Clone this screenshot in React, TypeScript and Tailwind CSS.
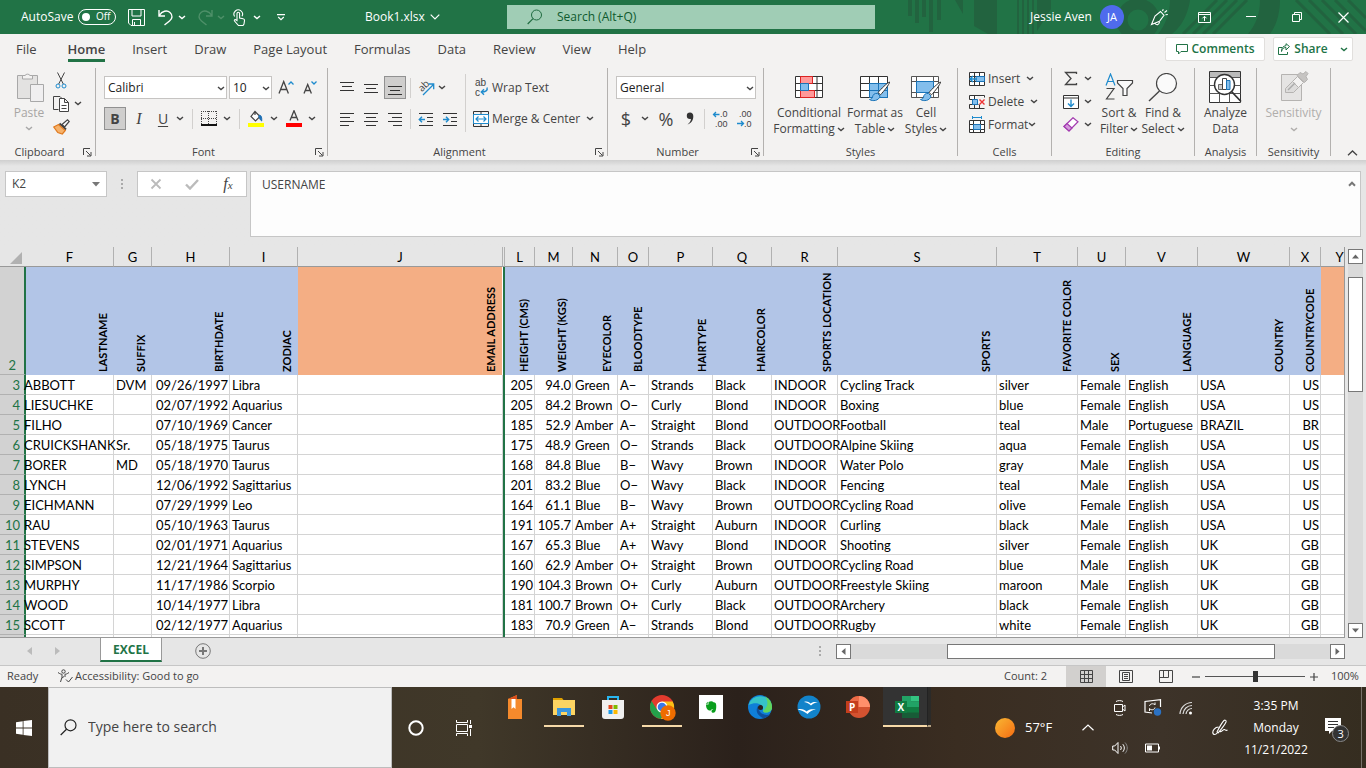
import { ReactNode } from "react"

const ink = "#444444"
const blue = "#1e8bcd"

const columns = [
  { id: "F", width: "w-[88px]", title: "LASTNAME" },
  { id: "G", width: "w-[38px]", title: "SUFFIX" },
  { id: "H", width: "w-[78px]", title: "BIRTHDATE", right: true },
  { id: "I", width: "w-[68px]", title: "ZODIAC" },
  { id: "J", width: "w-[205px]", title: "EMAIL ADDRESS", accent: true },
  { id: "K", width: "w-[2px]", title: "" },
  { id: "L", width: "w-[30px]", title: "HEIGHT (CMS)", right: true },
  { id: "M", width: "w-[38px]", title: "WEIGHT (KGS)", right: true },
  { id: "N", width: "w-[45px]", title: "EYECOLOR" },
  { id: "O", width: "w-[31px]", title: "BLOODTYPE" },
  { id: "P", width: "w-[64px]", title: "HAIRTYPE" },
  { id: "Q", width: "w-[59px]", title: "HAIRCOLOR" },
  { id: "R", width: "w-[66px]", title: "SPORTS LOCATION" },
  { id: "S", width: "w-[159px]", title: "SPORTS" },
  { id: "T", width: "w-[81px]", title: "FAVORITE COLOR" },
  { id: "U", width: "w-[48px]", title: "SEX" },
  { id: "V", width: "w-[72px]", title: "LANGUAGE" },
  { id: "W", width: "w-[92px]", title: "COUNTRY" },
  { id: "X", width: "w-[31px]", title: "COUNTRYCODE", right: true },
  { id: "Y", width: "w-[38px]", title: "", accent: true },
]

const rows = [
  "ABBOTT|DVM|09/26/1997|Libra|||205|94.0|Green|A−|Strands|Black|INDOOR|Cycling Track|silver|Female|English|USA|US|",
  "LIESUCHKE||02/07/1992|Aquarius|||205|84.2|Brown|O−|Curly|Blond|INDOOR|Boxing|blue|Female|English|USA|US|",
  "FILHO||07/10/1969|Cancer|||185|52.9|Amber|A−|Straight|Blond|OUTDOOR|Football|teal|Male|Portuguese|BRAZIL|BR|",
  "CRUICKSHANK|Sr.|05/18/1975|Taurus|||175|48.9|Green|O−|Strands|Black|OUTDOOR|Alpine Skiing|aqua|Female|English|USA|US|",
  "BORER|MD|05/18/1970|Taurus|||168|84.8|Blue|B−|Wavy|Brown|INDOOR|Water Polo|gray|Male|English|USA|US|",
  "LYNCH||12/06/1992|Sagittarius|||201|83.2|Blue|O−|Wavy|Black|INDOOR|Fencing|teal|Male|English|USA|US|",
  "EICHMANN||07/29/1999|Leo|||164|61.1|Blue|B−|Wavy|Brown|OUTDOOR|Cycling Road|olive|Female|English|USA|US|",
  "RAU||05/10/1963|Taurus|||191|105.7|Amber|A+|Straight|Auburn|INDOOR|Curling|black|Male|English|USA|US|",
  "STEVENS||02/01/1971|Aquarius|||167|65.3|Blue|A+|Wavy|Blond|INDOOR|Shooting|silver|Female|English|UK|GB|",
  "SIMPSON||12/21/1964|Sagittarius|||160|62.9|Amber|O+|Straight|Brown|OUTDOOR|Cycling Road|blue|Male|English|UK|GB|",
  "MURPHY||11/17/1986|Scorpio|||190|104.3|Brown|O+|Curly|Auburn|OUTDOOR|Freestyle Skiing|maroon|Male|English|UK|GB|",
  "WOOD||10/14/1977|Libra|||181|100.7|Brown|O+|Curly|Black|OUTDOOR|Archery|black|Female|English|UK|GB|",
  "SCOTT||02/12/1977|Aquarius|||183|70.9|Green|A−|Strands|Blond|OUTDOOR|Rugby|white|Female|English|UK|GB|",
].map((line) => line.split("|"))

function Svg({ w, h, children, className = "" }: { w: number; h: number; children: ReactNode; className?: string }) {
  return (
    <svg width={w} height={h} viewBox={`0 0 ${w} ${h}`} fill="none" stroke={ink} className={`shrink-0 ${className}`} aria-hidden="true">
      {children}
    </svg>
  )
}

function Chevron({ color = ink, className = "" }: { color?: string; className?: string }) {
  return (
    <Svg w={8} h={5} className={className}>
      <path d="M1 1l3 2.6L7 1" stroke={color} strokeWidth="1.4" />
    </Svg>
  )
}

function IconButton({ label, className = "", children }: { label: string; className?: string; children: ReactNode }) {
  return (
    <button type="button" aria-label={label} className={`flex shrink-0 items-center justify-center ${className}`}>
      {children}
    </button>
  )
}

function Group({ label, width, launcher, children }: { label: string; width: string; launcher?: boolean; children: ReactNode }) {
  return (
    <section aria-label={label} className={`flex shrink-0 ${width}`}>
      <div className="flex min-w-0 flex-1 flex-col">
        <div className="flex h-20">{children}</div>
        <div className="flex h-4 items-center text-[11px]">
          <span className="flex-1 text-center">{label}</span>
          {launcher && (
            <IconButton label={`${label} settings`} className="w-4">
              <Svg w={9} h={9}>
                <path d="M.5 7V.5H7M3 3l4.5 4.5M8 4v4H4" />
              </Svg>
            </IconButton>
          )}
        </div>
      </div>
      <div className="my-1 w-px bg-[#b3b1af]" />
    </section>
  )
}

function BigButton({ lines, width, icon, chevron, disabled }: { lines: string[]; width: string; icon: ReactNode; chevron?: boolean; disabled?: boolean }) {
  return (
    <button type="button" disabled={disabled} className={`flex shrink-0 flex-col items-center pt-[6px] text-xs leading-4 whitespace-nowrap disabled:text-[#b0aeac] ${width}`}>
      <span className="flex h-[35px] items-center">{icon}</span>
      <span>{lines[0]}</span>
      <span className="flex h-4 items-center gap-[2px]">
        {lines[1]}
        {chevron && <Chevron color={disabled ? "#b0aeac" : ink} />}
      </span>
    </button>
  )
}

function Combo({ label, value, width }: { label: string; value: string; width: string }) {
  return (
    <div className={`relative h-[23px] shrink-0 ${width}`}>
      <select aria-label={label} className="h-full w-full appearance-none border border-[#c6c4c2] bg-white pl-[3px] text-xs text-[#222]">
        <option>{value}</option>
      </select>
      <Chevron className="pointer-events-none absolute top-[10px] right-[2px]" />
    </div>
  )
}

function TitlePattern() {
  return (
    <svg className="absolute top-0 right-0" width="466" height="34" viewBox="0 0 466 34" fill="#22633f" aria-hidden="true">
      <path d="M8 0h4v16H8zM15 0h4v23h-4zM22 0h4v17h-4zM29 0h4v32h-4zM37 0h4v20h-4zM55 0h8v14zM74 0h23v34H88L74 26zM117 0h2v34h-2zM122 0h2v34h-2zM127 0h2v34h-2zM132 0h2v34h-2zM137 0h14v9l-14 22z" />
      <circle cx="238" cy="20" r="16" fill="none" stroke="#22633f" strokeWidth="11" />
      <path d="M270 0h20c-2 14-8 26-18 34h-14c8-10 12-22 12-34zM360 0h20c0 14-4 26-10 34h-22c8-10 12-20 12-34z" />
      <path d="M283 34l34-34M293 34l34-34M303 34l34-34M313 34l34-34M396 0l34 34M409 0l34 34M422 0l34 34M435 0l31 31M448 0l18 18" stroke="#22633f" strokeWidth="3" />
    </svg>
  )
}

function TitleBar() {
  return (
    <header className="relative flex h-[34px] shrink-0 items-center bg-[#217346] text-xs text-white">
      <TitlePattern />
      <div className="relative flex h-full min-w-0 flex-1 items-center pl-[21px]">
        <label htmlFor="autosave" className="w-[57px]">AutoSave</label>
        <button id="autosave" type="button" role="switch" aria-checked="false" className="flex h-4 w-[38px] shrink-0 items-center gap-[6px] rounded-full border border-white pl-[3px] text-[10px]">
          <span className="h-2 w-2 rounded-full bg-white" />
          Off
        </button>
        <IconButton label="Save" className="ml-[11px] w-[18px]">
          <Svg w={17} h={17}>
            <g stroke="#fff">
              <path d="M.5.5h16v16H3L.5 14zM4 .5V7h9V.5M4.500 16v-5.500h8V16M6.500 13v3" />
            </g>
          </Svg>
        </IconButton>
        <IconButton label="Undo" className="ml-3 w-[16px]">
          <Svg w={15} h={17}>
            <path d="M1 1v6h6M1.300 6.500C4 2 9 .8 12 3.500s2.500 6-.5 8.500L6.500 16" stroke="#fff" strokeWidth="1.400" />
          </Svg>
        </IconButton>
        <Chevron color="#fff" className="ml-[5px]" />
        <IconButton label="Redo" className="ml-[11px] w-[16px]">
          <Svg w={15} h={17}>
            <path d="M14 1v6H8M13.700 6.500C11 2 6 .8 3 3.500s-2.500 6 .5 8.500l5 4" stroke="#4e9069" strokeWidth="1.400" />
          </Svg>
        </IconButton>
        <Chevron color="#4e9069" className="ml-1" />
        <IconButton label="Touch mode" className="ml-[7px] w-[14px]">
          <Svg w={14} h={17}>
            <path d="M5 11.500V4.500a1.300 1.300 0 0 1 2.600 0V9l3.500.8c1 .2 1.500.8 1.400 1.800L12 15l-1 1.500H6.500L2.500 12c-.6-1 .8-1.800 1.600-1zM2.600 7.500A4.300 4.300 0 1 1 10 7.300" stroke="#fff" strokeWidth="1.100" />
          </Svg>
        </IconButton>
        <Chevron color="#fff" className="ml-[7px]" />
        <IconButton label="Customize toolbar" className="ml-4 w-[8px]">
          <Svg w={8} h={7}>
            <path d="M0 .7h8M1.200 3L4 5.600 6.800 3" stroke="#fff" strokeWidth="1.200" />
          </Svg>
        </IconButton>
        <button type="button" className="ml-20 flex items-center gap-[5px]">
          Book1.xlsx
          <Svg w={10} h={6}>
            <path d="M.7.7L5 5 9.300.7" stroke="#fff" strokeWidth="1.200" />
          </Svg>
        </button>
      </div>
      <div className="relative flex h-6 w-[368px] shrink-0 items-center bg-[#a0cdb5] pl-5">
        <Svg w={16} h={16}>
          <circle cx="9.500" cy="6" r="5" stroke="#1f6b40" />
          <path d="M6 9.700L.7 15" stroke="#1f6b40" strokeWidth="1.200" />
        </Svg>
        <input aria-label="Search" placeholder="Search (Alt+Q)" className="ml-[14px] min-w-0 flex-1 bg-transparent outline-none placeholder:text-[#0f5a2e]" />
      </div>
      <div className="relative flex h-full w-[491px] shrink-0 items-center pl-[155px]">
        <span className="w-[70px]">Jessie Aven</span>
        <button type="button" aria-label="Account JA" className="h-6 w-6 rounded-full bg-[#4f6bed] text-[11px]">JA</button>
        <IconButton label="Coming soon" className="ml-[26px] w-[18px]">
          <Svg w={18} h={17}>
            <path d="M1.500 15.500L5 7l5.500-4.500 3.500 3.800-4.500 6-8 3.200zM5 14.500c1.500 2 4 1.500 4.500-1.500M12.500 2l.8-1.800M14.500 3.500l2.500-2M15.500 5.800l2.300-.3" stroke="#fff" strokeWidth="1.100" />
          </Svg>
        </IconButton>
        <IconButton label="Ribbon display options" className="ml-[30px] w-[13px]">
          <Svg w={13} h={11}>
            <path d="M.5.5h12v10H.5zM.5 2.500h12M6.500 9V4.500M4.500 6.300l2-2 2 2" stroke="#fff" />
          </Svg>
        </IconButton>
        <IconButton label="Minimize" className="ml-[35px] w-[10px]">
          <Svg w={10} h={2}>
            <path d="M0 .5h10" stroke="#fff" />
          </Svg>
        </IconButton>
        <IconButton label="Restore" className="ml-9 w-[10px]">
          <Svg w={10} h={10}>
            <path d="M.5 2.500h7v7h-7zM2.500 2.500v-2h7v7h-2" stroke="#fff" />
          </Svg>
        </IconButton>
        <IconButton label="Close" className="ml-9 w-[11px]">
          <Svg w={11} h={11}>
            <path d="M.5.5l10 10M10.500.5l-10 10" stroke="#fff" strokeWidth="1.200" />
          </Svg>
        </IconButton>
      </div>
    </header>
  )
}

function TabRow() {
  const tabs = ["Insert", "Draw", "Page Layout", "Formulas", "Data", "Review", "View", "Help"]
  return (
    <div className="flex h-[30px] shrink-0 items-center pr-[13px] text-[13px] text-[#444]">
      <nav aria-label="Ribbon tabs" className="flex flex-1 items-center gap-[27px] pt-px pl-4">
        <button type="button">File</button>
        <button type="button" className="ml-1 border-b-[3px] border-[#217346] pt-1 font-semibold">Home</button>
        {tabs.map((tab) => (
          <button key={tab} type="button" className="whitespace-nowrap">{tab}</button>
        ))}
      </nav>
      <button type="button" className="flex h-6 w-[100px] items-center justify-center gap-1 rounded-xs border border-[#e1dfdd] bg-white text-xs font-semibold text-[#217346]">
        <Svg w={12} h={11}>
          <path d="M.5.500h11v7H5L2.500 10V7.500h-2z" stroke="#217346" />
        </Svg>
        Comments
      </button>
      <button type="button" className="ml-2 flex h-6 w-20 items-center justify-center gap-1 rounded-xs border border-[#e1dfdd] bg-white text-xs font-semibold text-[#217346]">
        <Svg w={12} h={12}>
          <path d="M4 4.500H.5v7h9V9M3.500 8.500C4 5.500 6 4.500 8 4.500V7l3.500-3.500L8 .7v2C5 3 3.500 5 3.500 8.500z" stroke="#217346" />
        </Svg>
        Share
        <Chevron color="#217346" className="ml-2" />
      </button>
    </div>
  )
}

function Lines({ d, children }: { d: string; children?: ReactNode }) {
  return (
    <Svg w={16} h={14}>
      <path d={d} stroke="#333" strokeWidth="1" />
      {children}
    </Svg>
  )
}

function ClipboardGroup() {
  return (
    <Group label="Clipboard" width="w-[96px]" launcher>
      <button type="button" disabled className="ml-[9px] flex w-10 flex-col items-center pt-2 text-xs leading-4 text-[#a8a6a4]">
        <Svg w={30} h={33}>
          <path d="M3.500 3.500h20v23h-20z" fill="#e3e2e1" stroke="#a8a8a8" />
          <path d="M8.500 7V3.500h2.500a3 3 0 0 1 5 0h2.500V7z" fill="#f3f2f1" stroke="#a8a8a8" />
          <path d="M16.500 12.500h13v17h-13z" fill="#f0eff0" stroke="#a8a8a8" />
        </Svg>
        Paste
        <Chevron color="#a8a8a8" className="mt-[5px]" />
      </button>
      <div className="flex flex-col pt-[5px] pl-[3px]">
        <IconButton label="Cut" className="h-[23px] w-[18px]">
          <Svg w={12} h={17}>
            <path d="M2.500.5l5.800 11.500M9.500.5L3.700 12" />
            <circle cx="3" cy="14" r="2" stroke={blue} />
            <circle cx="9" cy="14" r="2" stroke={blue} />
          </Svg>
        </IconButton>
        <div className="flex items-center">
          <IconButton label="Copy" className="h-[23px] w-[17px]">
            <Svg w={16} h={16}>
              <path d="M5.500 13.500h-5V.5h6.500l2 2" />
              <path d="M6.500 2.500h5l4 4v9h-9zM11.500 2.500v4h4M8.500 9.500h5M8.500 12.500h5" fill="#fff" />
            </Svg>
          </IconButton>
          <Chevron className="ml-[5px]" />
        </div>
        <IconButton label="Format Painter" className="h-[23px] w-[19px]">
          <Svg w={17} h={16}>
            <path d="M9 5.500L14.500 .8l1.700 1.700L11.500 8z" fill="#fff" strokeWidth="1.200" />
            <path d="M6.500 4.500l6.500 6" strokeWidth="2" />
            <path d="M5.500 5.500L.8 8l4 5.500 4.500 1.500 3-3.500z" fill="#f6b26b" stroke="#e07a1f" strokeWidth="1.200" />
          </Svg>
        </IconButton>
      </div>
    </Group>
  )
}

function FontGroup() {
  return (
    <Group label="Font" width="w-[232px]" launcher>
      <div className="flex flex-col gap-2 pt-3 pl-2">
        <div className="flex h-[23px] items-center gap-[2px]">
          <Combo label="Font name" value="Calibri" width="w-[123px]" />
          <Combo label="Font size" value="10" width="w-[43px]" />
          <IconButton label="Increase font size" className="w-[23px]">
            <Svg w={16} h={15}>
              <path d="M1 13.500L5.700 1.500l4.700 12M2.700 9.500h6" strokeWidth="1.300" />
              <path d="M10.500 4.500L13 2l2.500 2.500" stroke={blue} strokeWidth="1.300" />
            </Svg>
          </IconButton>
          <IconButton label="Decrease font size" className="w-[22px]">
            <Svg w={14} h={15}>
              <path d="M1 13.500L4.700 4.500l3.700 9M2.500 10.500h4.500" strokeWidth="1.300" />
              <path d="M8.500 1.500L11 4l2.500-2.500" stroke={blue} strokeWidth="1.300" />
            </Svg>
          </IconButton>
        </div>
        <div className="flex h-[23px] items-center text-sm">
          <button type="button" aria-pressed="true" className="h-[23px] w-[22px] border border-[#919191] bg-[#cfcecd] leading-5 font-bold">B</button>
          <button type="button" aria-label="Italic" className="w-[26px] font-['Liberation_Serif',serif] text-base italic">I</button>
          <button type="button" aria-label="Underline" className="w-[22px] underline underline-offset-2">U</button>
          <Chevron className="ml-[2px]" />
          <span className="mx-2 h-5 w-px bg-[#d2d0ce]" />
          <IconButton label="Borders" className="w-4">
            <Svg w={16} h={15}>
              <path d="M0 .5h16M0 7.500h16M.5 0v14M7.500 0v14M15.500 0v14" stroke="#444" strokeDasharray="1 1" shapeRendering="crispEdges" />
              <path d="M0 14h16" stroke="#111" strokeWidth="2" />
            </Svg>
          </IconButton>
          <Chevron className="ml-[6px]" />
          <span className="mx-2 h-5 w-px bg-[#d2d0ce]" />
          <IconButton label="Fill color" className="w-4">
            <Svg w={16} h={17}>
              <path d="M7 1.500L12 6.500 7.500 11 3 6.500zM7 5V1" fill="#fff" strokeWidth="1.200" />
              <path d="M11.500 5c2 .5 2.500 3 2.200 6-1.800-1-2-3-3-4.500z" fill="#1e6fb4" stroke="#1e6fb4" />
              <path d="M0 15h16" stroke="#ff0" strokeWidth="4" />
            </Svg>
          </IconButton>
          <Chevron className="ml-[6px]" />
          <IconButton label="Font color" className="ml-2 w-4">
            <Svg w={16} h={17}>
              <path d="M4 10.500L8 .700l4 9.800M5.300 7.500h5.400" strokeWidth="1.300" />
              <path d="M0 15h16" stroke="#f00" strokeWidth="4" />
            </Svg>
          </IconButton>
          <Chevron className="ml-[6px]" />
        </div>
      </div>
    </Group>
  )
}

function AlignmentGroup() {
  return (
    <Group label="Alignment" width="w-[280px]" launcher>
      <div className="flex w-[137px] flex-col gap-2 pt-3 pl-[7px]">
        <div className="flex h-[23px] items-center">
          <IconButton label="Top align" className="w-6">
            <Lines d="M1 1.500h14M3 5.500h10M1 9.500h14" />
          </IconButton>
          <IconButton label="Middle align" className="w-6">
            <Lines d="M1 3.500h14M3 7.500h10M1 11.500h14" />
          </IconButton>
          <IconButton label="Bottom align" className="mx-px h-[23px] w-[22px] border border-[#919191] bg-[#cfcecd]">
            <Lines d="M1 5.500h14M3 9.500h10M1 13.500h14" />
          </IconButton>
          <span className="mx-[3px] h-5 w-px bg-[#d2d0ce]" />
          <IconButton label="Orientation" className="w-6">
            <svg width="17" height="17" viewBox="0 0 17 17" fill="none" className="overflow-visible" aria-hidden="true">
              <text x="0" y="10" transform="rotate(-45 6 7)" fontSize="10" fill={ink}>ab</text>
              <path d="M5 16L15.500 5.500M10.500 5h5.200v5.200" stroke={blue} strokeWidth="1.300" />
            </svg>
          </IconButton>
          <Chevron />
        </div>
        <div className="flex h-[23px] items-center">
          <IconButton label="Align left" className="w-6">
            <Lines d="M1 1.500h14M1 5.500h10M1 9.500h14M1 13.500h9" />
          </IconButton>
          <IconButton label="Center" className="w-6">
            <Lines d="M1 1.500h14M3 5.500h10M1 9.500h14M3 13.500h10" />
          </IconButton>
          <IconButton label="Align right" className="w-6">
            <Lines d="M1 1.500h14M5 5.500h10M1 9.500h14M6 13.500h9" />
          </IconButton>
          <span className="mx-[3px] h-5 w-px bg-[#d2d0ce]" />
          <IconButton label="Decrease indent" className="w-6">
            <Lines d="M1 1.500h14M9 5.500h6M9 9.500h6M1 13.500h14">
              <path d="M7 7.500H1.500M4 4.800L1.300 7.500 4 10.200" stroke={blue} strokeWidth="1.400" />
            </Lines>
          </IconButton>
          <IconButton label="Increase indent" className="w-6">
            <Lines d="M1 1.500h14M9 5.500h6M9 9.500h6M1 13.500h14">
              <path d="M1 7.500h5.500M4 4.800l2.700 2.700L4 10.200" stroke={blue} strokeWidth="1.400" />
            </Lines>
          </IconButton>
        </div>
      </div>
      <span className="mt-[10px] h-[58px] w-px bg-[#d2d0ce]" />
      <div className="flex flex-col gap-2 pt-3 pl-[7px] text-xs whitespace-nowrap">
        <button type="button" className="flex h-[23px] items-center gap-[3px]">
          <svg width="16" height="19" viewBox="0 0 16 19" fill="none" className="overflow-visible font-['Liberation_Sans',sans-serif]" aria-hidden="true">
            <text x="2" y="8" fontSize="10" fill={ink}>ab</text>
            <text x="2" y="18" fontSize="10" fill={ink}>c</text>
            <path d="M14 9.500c1 3-1.500 4.500-5.500 4.500M11 11.300L8.300 14l2.700 2.700" stroke={blue} strokeWidth="1.400" />
          </svg>
          Wrap Text
        </button>
        <div className="flex items-center">
          <button type="button" className="flex h-[23px] items-center gap-[3px]">
            <Svg w={16} h={16}>
              <path d="M.5.500h15v15H.5zM8 .500v3M8 12.500v3" stroke="#333" />
              <path d="M.5 3.500h15v9H.5z" fill="#fff" stroke={blue} />
              <path d="M3 8h10M5.500 5.500L3 8l2.500 2.500M10.500 5.500L13 8l-2.500 2.500" stroke={blue} strokeWidth="1.200" />
            </Svg>
            Merge &amp; Center
          </button>
          <Chevron className="ml-[6px]" />
        </div>
      </div>
    </Group>
  )
}

function NumberGroup() {
  return (
    <Group label="Number" width="w-[156px]" launcher>
      <div className="flex flex-col gap-2 pt-3 pl-2">
        <Combo label="Number format" value="General" width="w-[140px]" />
        <div className="flex h-[23px] items-center text-lg leading-none">
          <button type="button" aria-label="Currency" className="w-5">$</button>
          <Chevron className="ml-[5px]" />
          <button type="button" aria-label="Percent" className="ml-[7px] w-5">%</button>
          <IconButton label="Comma style" className="w-7">
            <Svg w={8} h={14}>
              <path d="M4 .5a3.200 3.200 0 0 0 0 6.400c.5 0 .8 0 1-.2C4.800 9 3.500 11 1.500 12.500 5 11.500 7.500 8 7.300 4 7.200 1.800 6 .5 4 .5z" fill="#333" stroke="none" />
            </Svg>
          </IconButton>
          <span className="h-5 w-px bg-[#d2d0ce]" />
          <IconButton label="Increase decimal" className="ml-[6px] w-[18px]">
            <svg width="17" height="17" viewBox="0 0 17 17" fill="none" className="overflow-visible font-['Liberation_Sans',sans-serif]" aria-hidden="true">
              <text x="8" y="7" fontSize="9" fill={ink}>.0</text>
              <text x="3" y="17" fontSize="9" fill={ink}>.00</text>
              <path d="M7.500 4.500H1.500M4 2L1.500 4.500 4 7" stroke={blue} strokeWidth="1.300" />
            </svg>
          </IconButton>
          <IconButton label="Decrease decimal" className="ml-[6px] w-[18px]">
            <svg width="17" height="17" viewBox="0 0 17 17" fill="none" className="overflow-visible font-['Liberation_Sans',sans-serif]" aria-hidden="true">
              <text x="3" y="7" fontSize="9" fill={ink}>.00</text>
              <text x="8" y="17" fontSize="9" fill={ink}>.0</text>
              <path d="M1 13.500h6.500M5 11l2.500 2.500L5 16" stroke={blue} strokeWidth="1.300" />
            </svg>
          </IconButton>
        </div>
      </div>
    </Group>
  )
}

function Brush() {
  return (
    <>
      <path d="M29.500 8c-2 .5-9 7.500-11.500 10.500l2.500 2.300C23.500 17.500 29.500 10.500 29.500 8z" fill="#fff" stroke="#333" />
      <path d="M17.500 19.500c-3-.5-4.500 1-5 3.500-.3 1.500-1.500 2.300-3 2.500 3 2 9.500 1.500 10.500-3.500z" fill="#83beec" stroke="#1a74b8" />
    </>
  )
}

function StylesGroup() {
  return (
    <Group label="Styles" width="w-[194px]">
      <div className="flex pl-[9px]">
        <BigButton
          lines={["Conditional", "Formatting"]}
          width="w-[72px]"
          chevron
          icon={
            <Svg w={28} h={28}>
              <path d="M.5 2.500h27v21H.5zM.5 9.500h27M.5 16.500h27M6 2.500v21M22 2.500v21" stroke="#333" fill="#fff" />
              <path d="M5.500 2.500h12v7h-12zM5.500 16.500h14v7h-14z" fill="#f99" stroke="#d22" />
              <path d="M5.500 9.500h8v7h-8z" fill="#83beec" stroke="#1a74b8" />
            </Svg>
          }
        />
        <BigButton
          lines={["Format as", "Table"]}
          width="w-[60px]"
          chevron
          icon={
            <Svg w={31} h={28}>
              <path d="M.5 2.500h27v21H.5zM.5 9.500h27M.5 16.500h27M9.500 2.500v21M18.500 2.500v21" stroke="#333" fill="#fff" />
              <path d="M9.500 9.500h18v14h-18z" fill="#83beec" stroke="#1a74b8" />
              <path d="M9.500 16.500h18M18.500 9.500v14" stroke="#1a74b8" />
              <Brush />
            </Svg>
          }
        />
        <BigButton
          lines={["Cell", "Styles"]}
          width="w-[42px]"
          chevron
          icon={
            <Svg w={31} h={28}>
              <path d="M.5 2.500h27v21H.5zM.5 7.500h27M.5 18.500h27M5.500 2.500v21M22.500 2.500v21" stroke="#555" fill="#fff" />
              <path d="M5.500 7.500h17v11h-17z" fill="#83beec" stroke="#1a74b8" />
              <Brush />
            </Svg>
          }
        />
      </div>
    </Group>
  )
}

function CellsGroup() {
  return (
    <Group label="Cells" width="w-[94px]">
      <div className="flex flex-col pt-[3px] pl-[11px] text-xs [&>div]:flex [&>div]:h-[23px] [&>div]:items-center">
        <div>
          <button type="button" className="flex items-center gap-[3px]">
            <Svg w={16} h={14}>
              <path d="M.5.500h15v13H.5zM.5 4.500h15M.5 9.500h15M5.500.500v13M10.500.500v13" stroke="#333" fill="#fff" />
              <path d="M7 4.500h8.500v5H7z" fill="#83beec" stroke="#1a74b8" />
              <path d="M8 7H1M4 4L1 7l3 3" stroke={blue} strokeWidth="1.500" />
            </Svg>
            Insert
          </button>
          <Chevron className="ml-[6px]" />
        </div>
        <div>
          <button type="button" className="flex items-center gap-[3px]">
            <Svg w={16} h={14}>
              <path d="M9 .500H.5v4h5M.5 13.500h15M.5 9.500h9M.5 9.500v4M5.500 9.500v4M10.500 9.500v4M5.500.500v4M9 .500h6.500v2" stroke="#333" fill="#fff" />
              <path d="M3.500 4.500h5v5h-5z" fill="#83beec" stroke="#1a74b8" />
              <path d="M10.500 4.500l5 5M15.500 4.500l-5 5" stroke="#e33" strokeWidth="1.400" />
            </Svg>
            Delete
          </button>
          <Chevron className="ml-[6px]" />
        </div>
        <div>
          <button type="button" className="flex items-center gap-[3px]">
            <Svg w={16} h={17}>
              <path d="M.5 4.500h15v12H.5zM.5 8.500h15M.5 13.500h15M4.500 4.500v12M11.500 4.500v12" stroke="#333" fill="#fff" />
              <path d="M4.500 8.500h7v5h-7z" fill="#83beec" stroke="#1a74b8" />
              <path d="M3 1.500h10M3.500 0v3M12.500 0v3" stroke={blue} />
            </Svg>
            Format
          </button>
          <Chevron />
        </div>
      </div>
    </Group>
  )
}

function EditingGroup() {
  return (
    <Group label="Editing" width="w-[143px]">
      <div className="flex w-[45px] flex-col pt-[3px] pl-[11px] [&>button]:flex [&>button]:h-[23px] [&>button]:items-center [&>button]:gap-[5px]">
        <button type="button" aria-label="AutoSum">
          <Svg w={16} h={15}>
            <path d="M13.500 3V1.500H2.500L8 7.500l-5.500 6h11V12" strokeWidth="1.300" />
          </Svg>
          <Chevron />
        </button>
        <button type="button" aria-label="Fill">
          <Svg w={16} h={14}>
            <path d="M.5.500h15v13H.5zM.5 3h15" stroke="#333" fill="#fff" />
            <path d="M8 4.500v7M5 8.500l3 3 3-3" stroke={blue} strokeWidth="1.400" />
          </Svg>
          <Chevron />
        </button>
        <button type="button" aria-label="Clear">
          <Svg w={16} h={15}>
            <path d="M1 9.500L10 .700l5 4L6 14z" fill="#fff" stroke="#a33bb0" strokeWidth="1.200" />
            <path d="M1 9.500L4 6.500 9 11 6 14z" fill="#d59adc" stroke="#a33bb0" strokeWidth="1.200" />
          </Svg>
          <Chevron />
        </button>
      </div>
      <BigButton
        lines={["Sort &", "Filter"]}
        width="w-[44px]"
        chevron
        icon={
          <Svg w={30} h={30}>
            <path d="M2 12.500L6.500 1l4.500 11.500M3.500 8.500h6" stroke={blue} strokeWidth="1.200" />
            <path d="M2.500 15.500H10L2.500 26H10.500" strokeWidth="1.200" />
            <path d="M13.500 7.500h15v2.500l-5.500 5.500v7h-4v-7l-5.500-5.500z" strokeWidth="1.200" fill="#fafafa" />
          </Svg>
        }
      />
      <BigButton
        lines={["Find &", "Select"]}
        width="w-[44px]"
        chevron
        icon={
          <Svg w={30} h={30}>
            <circle cx="18.500" cy="10.500" r="10" strokeWidth="1.200" fill="#fafafa" />
            <path d="M11.500 18L1 28" strokeWidth="1.400" />
          </Svg>
        }
      />
    </Group>
  )
}

function Ribbon() {
  return (
    <div className="flex h-24 shrink-0 text-[#444]">
      <ClipboardGroup />
      <FontGroup />
      <AlignmentGroup />
      <NumberGroup />
      <StylesGroup />
      <CellsGroup />
      <EditingGroup />
      <Group label="Analysis" width="w-[62px]">
        <BigButton
          lines={["Analyze", "Data"]}
          width="w-full"
          icon={
            <Svg w={33} h={34}>
              <path d="M.5.500h31v31H.5z" fill="#fff" stroke="#333" />
              <path d="M1 1h30v5H1z" fill="#bbb" stroke="none" />
              <path d="M.5 6.500h31M.5 14.500h31M.5 22.500h31M10.500 22v9.500M20.500 22v9.500" stroke="#555" />
              <circle cx="15.500" cy="13.500" r="10" fill="#fff" stroke="#333" strokeWidth="1.400" />
              <path d="M22.500 20.500L32 30.500" stroke="#333" strokeWidth="1.800" />
              <path d="M9.500 13.500h4v5h-4z" fill="#ccc" stroke="#666" />
              <path d="M13.500 7.500h4v11h-4z" fill="#fff" />
              <path d="M17.500 9.500h3.500v9h-3.500z" fill="#83beec" stroke="#1a74b8" />
            </Svg>
          }
        />
      </Group>
      <Group label="Sensitivity" width="w-[74px]">
        <BigButton
          lines={["Sensitivity", ""]}
          width="w-full"
          chevron
          disabled
          icon={
            <Svg w={32} h={33}>
              <path d="M3.500 3.500h20v26h-20z" fill="#e5e4e3" stroke="#b5b3b1" />
              <path d="M7.500 17.500l7-7 6 6-5 5H7.500z" fill="#dddcdb" stroke="#b5b3b1" />
              <path d="M14.500 10.500l5-5 6 6-5 5z" fill="#f3f2f1" stroke="#b5b3b1" />
              <path d="M19 4.500l3-3 3 1.500 3-2.500 2 2-2 3 1.500 3-3 3z" fill="#c6c4c2" stroke="#b5b3b1" />
              <path d="M10 19l7-7" stroke="#aaa" strokeWidth="1.500" />
            </Svg>
          }
        />
      </Group>
      <div className="flex flex-1 items-end justify-end pr-2 pb-1">
        <IconButton label="Collapse the ribbon" className="w-3">
          <Svg w={11} h={6}>
            <path d="M1 5.200L5.500 1 10 5.200" strokeWidth="1.300" />
          </Svg>
        </IconButton>
      </div>
    </div>
  )
}

function Dots() {
  return (
    <Svg w={2} h={10}>
      <path d="M0 1h2M0 5h2M0 9h2" stroke="#aaa" strokeWidth="2" />
    </Svg>
  )
}

function FormulaBar() {
  return (
    <div className="flex shrink-0 items-start bg-[#e6e6e6] bg-linear-to-b from-[#cfcfcf] to-[#e6e6e6] to-[6px] pt-[11px] pr-[5px] pb-[10px] pl-[5px] text-xs text-[#444]">
      <div className="flex h-[26px] w-[102px] shrink-0 items-center border border-[#c6c6c6] bg-white pr-[6px] pl-[6px]">
        <input aria-label="Name box" defaultValue="K2" className="min-w-0 flex-1 outline-none" />
        <Svg w={8} h={5}>
          <path d="M0 0h8L4 4.500z" fill="#777" stroke="none" />
        </Svg>
      </div>
      <span className="flex h-[26px] w-[30px] items-center justify-center">
        <Dots />
      </span>
      <div className="flex h-[26px] w-[110px] shrink-0 items-center border border-[#c6c6c6] bg-white">
        <IconButton label="Cancel" className="w-9">
          <Svg w={12} h={12}>
            <path d="M1.500 1.500l9 9M10.500 1.500l-9 9" stroke="#bbb" strokeWidth="1.800" />
          </Svg>
        </IconButton>
        <IconButton label="Enter" className="w-9">
          <Svg w={14} h={11}>
            <path d="M1 5.500L5 9.500 13 1" stroke="#bbb" strokeWidth="2.400" />
          </Svg>
        </IconButton>
        <button type="button" aria-label="Insert function" className="w-9 font-['Liberation_Serif',serif] text-base leading-none italic">
          f<span className="text-[11px]">x</span>
        </button>
      </div>
      <div className="ml-[3px] flex h-[66px] min-w-0 flex-1 items-start border border-[#c6c6c6] bg-[#fdfdfd]">
        <textarea aria-label="Formula bar" defaultValue="USERNAME" className="h-full min-w-0 flex-1 resize-none pt-1 pl-[11px] leading-[18px] outline-none" />
        <IconButton label="Collapse formula bar" className="mt-[9px] mr-1 w-2">
          <Svg w={8} h={6}>
            <path d="M1 4.700L4 1.700l3 3" stroke="#777" strokeWidth="2" />
          </Svg>
        </IconButton>
      </div>
    </div>
  )
}

function Sheet() {
  return (
    <div className="min-h-0 min-w-0 flex-1 overflow-hidden border-r border-b border-[#999] bg-white">
      <table className="w-[1359px] table-fixed border-separate border-spacing-0 font-[Lato,sans-serif] text-[13px] leading-[18px] text-black">
        <colgroup>
          <col className="w-[26px]" />
          {columns.map((c) => (
            <col key={c.id} className={c.width} />
          ))}
        </colgroup>
        <thead>
          <tr className="h-5 bg-[#e6e6e6]">
            <th aria-label="Select all" className="border-b border-[#999] p-0">
              <Svg w={12} h={12} className="mt-[3px] ml-[10px]">
                <path d="M12 0v12H0z" fill="#b1b1b1" stroke="none" />
              </Svg>
            </th>
            {columns.map((c) => (
              <th key={c.id} scope="col" className="border-r border-b border-r-[#b1b1b1] border-b-[#999] p-0 font-normal">
                {c.id === "K" ? "" : c.id}
              </th>
            ))}
          </tr>
        </thead>
        <tbody>
          <tr className="h-[108px]">
            <th scope="row" className="border-r-2 border-b border-r-[#217346] border-b-[#b1b1b1] bg-[#d2d2d2] pr-2 text-right align-bottom font-normal text-[#217346]">2</th>
            {columns.map((c) => (
              <td
                key={c.id}
                className={
                  c.id === "K"
                    ? "bg-[#217346] p-0"
                    : c.id === "J"
                      ? "border-r border-white bg-[#f4ae84] p-0"
                      : c.accent
                        ? "bg-[#f4ae84] p-0"
                        : "bg-[#b2c5e7] p-0"
                }
              >
                <div className="flex h-[108px] justify-end pt-1 pr-[3px] pb-[3px]">
                  <span className="rotate-180 text-[11px] leading-[17px] font-bold whitespace-nowrap [writing-mode:vertical-rl]">{c.title}</span>
                </div>
              </td>
            ))}
          </tr>
          {rows.map((row, r) => (
            <tr key={row[0]} className="h-5">
              <th scope="row" className="border-r-2 border-b border-r-[#217346] border-b-[#b1b1b1] bg-[#d2d2d2] p-0 pt-px pr-1 text-right font-normal text-[#217346]">{r + 3}</th>
              {columns.map((c, i) => (
                <td
                  key={c.id}
                  className={
                    c.id === "K"
                      ? "bg-[#217346] p-0"
                      : c.right
                        ? "border-r border-b border-[#d4d4d4] p-0 pt-px pr-px text-right whitespace-nowrap"
                        : c.id === "F"
                          ? "border-r border-b border-[#d4d4d4] p-0 pt-px -indent-[2px] whitespace-nowrap"
                          : "border-r border-b border-[#d4d4d4] p-0 pt-px pl-[2px] whitespace-nowrap"
                  }
                >
                  {row[i]}
                </td>
              ))}
            </tr>
          ))}
          <tr className="h-5">
            <th aria-label="16" className="border-r-2 border-[#217346] bg-[#d2d2d2]" />
            {columns.map((c) => (
              <td key={c.id} className={c.id === "K" ? "bg-[#217346] p-0" : "border-r border-[#d4d4d4] p-0"} />
            ))}
          </tr>
        </tbody>
      </table>
    </div>
  )
}

function ScrollButton({ label, d }: { label: string; d: string }) {
  return (
    <IconButton label={label} className="h-[15px] w-[15px] border border-[#777] bg-white">
      <Svg w={9} h={9}>
        <path d={d} fill="#666" stroke="none" />
      </Svg>
    </IconButton>
  )
}

function SheetTabs() {
  return (
    <div className="flex h-7 shrink-0 items-start border-b border-[#c6c6c6] bg-[#e6e6e6]">
      <IconButton label="Previous sheet" className="ml-[25px] h-[26px] w-2">
        <Svg w={5} h={8}>
          <path d="M5 0v8L0 4z" fill="#bbb" stroke="none" />
        </Svg>
      </IconButton>
      <IconButton label="Next sheet" className="ml-5 h-[26px] w-2">
        <Svg w={5} h={8}>
          <path d="M0 0v8l5-4z" fill="#bbb" stroke="none" />
        </Svg>
      </IconButton>
      <button type="button" className="ml-[39px] h-6 w-[62px] border-x border-b-2 border-x-[#999] border-b-[#217346] bg-white pt-px text-xs font-bold text-[#217346]">EXCEL</button>
      <IconButton label="New sheet" className="ml-[33px] h-[26px] w-4">
        <Svg w={16} h={16}>
          <circle cx="8" cy="8" r="7.300" stroke="#777" />
          <path d="M8 4v8M4 8h8" stroke="#777" strokeWidth="2" />
        </Svg>
      </IconButton>
      <div className="min-w-0 flex-1" />
      <span className="flex h-[26px] w-[17px] items-center">
        <Dots />
      </span>
      <div role="scrollbar" aria-label="Horizontal scroll" aria-valuenow={23} aria-controls="sheet" className="mt-[6px] mr-[21px] flex h-[15px] w-[509px] bg-[#dadada]">
        <ScrollButton label="Scroll left" d="M6.500 1v7L2.500 4.500z" />
        <div className="w-24" />
        <div className="flex-1 border border-[#777] bg-white" />
        <div className="w-[55px]" />
        <ScrollButton label="Scroll right" d="M2.500 1v7l4-3.500z" />
      </div>
    </div>
  )
}

function StatusBar() {
  return (
    <footer className="flex h-[21px] shrink-0 items-center bg-[#f3f2f1] text-[11px] text-[#444]">
      <span className="w-[57px] pl-[7px]">Ready</span>
      <button type="button" className="flex items-center gap-[2px] whitespace-nowrap">
        <Svg w={16} h={15}>
          <circle cx="6.500" cy="2.500" r="1.700" />
          <path d="M1 3.500c2 1.500 3 1.700 4 1.700v3L3.500 13M12 3.500c-2 1.500-3 1.700-4 1.700V8M5 9l2-1.500M9 10.500l2.500 2.500L15.500 8" />
        </Svg>
        Accessibility: Good to go
      </button>
      <div className="flex-1" />
      <span className="mr-[19px] whitespace-nowrap">Count: 2</span>
      <IconButton label="Normal view" className="h-full w-10 bg-[#d2d0ce]">
        <Svg w={13} h={13}>
          <path d="M.5.500h12v12H.5zM4.500.500v12M8.500.500v12M.5 4.500h12M.5 8.500h12" />
        </Svg>
      </IconButton>
      <IconButton label="Page layout view" className="w-10">
        <Svg w={14} h={13}>
          <path d="M.5.500h13v12H.5zM3.500 2.500h7v8h-7zM5 4.500h4M5 6.500h4M5 8.500h4" />
        </Svg>
      </IconButton>
      <IconButton label="Page break preview" className="w-10">
        <Svg w={14} h={13}>
          <path d="M.5.500h13v12H.5zM.5 7.500h9V.500M4.500.500v7" />
        </Svg>
      </IconButton>
      <IconButton label="Zoom out" className="ml-1 w-3">
        <Svg w={8} h={8}>
          <path d="M0 4h8" strokeWidth="1.200" />
        </Svg>
      </IconButton>
      <input
        type="range"
        aria-label="Zoom"
        min={0}
        max={100}
        defaultValue={50}
        className="ml-[3px] h-3 w-[100px] appearance-none bg-transparent [&::-webkit-slider-runnable-track]:h-px [&::-webkit-slider-runnable-track]:bg-[#555] [&::-webkit-slider-thumb]:-mt-[5px] [&::-webkit-slider-thumb]:h-[11px] [&::-webkit-slider-thumb]:w-[5px] [&::-webkit-slider-thumb]:appearance-none [&::-webkit-slider-thumb]:bg-[#333]"
      />
      <IconButton label="Zoom in" className="ml-[3px] w-3">
        <Svg w={8} h={8}>
          <path d="M0 4h8M4 0v8" strokeWidth="1.200" />
        </Svg>
      </IconButton>
      <span className="ml-[11px] w-[35px]">100%</span>
    </footer>
  )
}

function TaskApp({ label, state = "", children }: { label: string; state?: string; children: ReactNode }) {
  return (
    <button type="button" aria-label={label} className={`flex h-10 w-10 shrink-0 items-center justify-center border-b-2 pt-px ${state || "border-transparent"}`}>
      <svg width="26" height="26" viewBox="0 0 26 26" fill="none" className="overflow-visible" aria-hidden="true">
        {children}
      </svg>
    </button>
  )
}

function TaskApps() {
  return (
    <div className="flex gap-[9px] self-start">
      <TaskApp label="Office reader">
        <path d="M6 5l9-4v4h5v20H6z" fill="#f58a2c" />
        <path d="M6 5l9-4v4z" fill="#d9501e" />
        <path d="M9.500 5h4v10l-2-1.800-2 1.800z" fill="#fff" />
      </TaskApp>
      <TaskApp label="File Explorer" state="border-[#f6d9a8]">
        <path d="M2 4h9l1.500 2H22v6H2z" fill="#e0a100" />
        <path d="M2 6h22v15H2z" fill="#fcd462" />
        <path d="M6 22v-8h14v8h-4v-4h-6v4z" fill="#3a96dd" />
      </TaskApp>
      <TaskApp label="Microsoft Store">
        <path d="M8 7V3h10v4" stroke="#29b6f0" strokeWidth="2" />
        <path d="M2 6h22v16a3 3 0 0 1-3 3H5a3 3 0 0 1-3-3z" fill="#f0f0f0" />
        <path d="M8.500 11h4v4h-4z" fill="#e5481f" />
        <path d="M13.500 11h4v4h-4z" fill="#7fba00" />
        <path d="M8.500 16h4v4h-4z" fill="#1a9bea" />
        <path d="M13.500 16h4v4h-4z" fill="#fdb900" />
      </TaskApp>
      <TaskApp label="Google Chrome" state="border-[#f6d9a8]">
        <circle cx="13" cy="13" r="12" fill="#e33b2e" />
        <path d="M2.600 7A12 12 0 0 0 12 25l4.500-9L7.500 15z" fill="#24a04b" />
        <path d="M13 7.500h10.700A12 12 0 0 1 12 25l5.500-9z" fill="#fbc116" />
        <circle cx="13" cy="13" r="5.500" fill="#fff" />
        <circle cx="13" cy="13" r="4.300" fill="#3b78e7" />
        <circle cx="19" cy="19" r="7.700" fill="#ee6c00" />
        <text x="17" y="22" fontSize="9" fill="#fff" className="font-['Liberation_Sans',sans-serif]">J</text>
      </TaskApp>
      <TaskApp label="Evernote">
        <path d="M1 1h24v24H1z" fill="#fff" />
        <path d="M8 10.500h2.500V8c2-1 4-1 5 .3 2 .2 2.500.7 2.700 2.700.2 3-.2 5.500-1.200 7-1 1.200-3.500 1-3.500-.8 0-1.300 1-1.700 1.800-1.500-.8-.8-2-.5-2.500.8-2.800.3-4.800-1.500-4.800-6z" fill="#0a9e1c" />
        <path d="M7.800 9.700l2-2v2z" fill="#0a9e1c" />
      </TaskApp>
      <TaskApp label="Microsoft Edge">
        <circle cx="13" cy="13" r="12" fill="#0f7fd8" />
        <path d="M1.500 11A12 12 0 0 1 25 13c0 4-3 5.500-6 5.500-4 0-3-2-3-4C16 10 9 7 1.500 11z" fill="#36c3c8" />
        <path d="M18 2.500A12 12 0 0 1 25 13c0 4-3 5.500-6 5.500-2 0-3-.7-3-1.500 5-4 6-9 2-14.500z" fill="#62d65c" />
        <path d="M11 12c-3 4-1 10 6 12.300 3-.8 5-2.300 6.500-4.300-5 2.500-12 0-12.500-8z" fill="#0d4f9c" />
        <circle cx="13.500" cy="13.500" r="2.500" fill="#2b211b" />
      </TaskApp>
      <TaskApp label="OpenOffice">
        <circle cx="13" cy="13" r="11.500" fill="#1283ca" />
        <path d="M8 8c3-1 5 0 6.500 1.500C16 8 19 7.500 22 8.500c-3 0-5 1-7 3-2-2-4-3-7-3.500zM1.500 15.500c4-1 7 0 9 2 2.500-2.500 6-2.500 9.500-2-4 .5-6 2-8.500 4.500-3-2.500-5.500-3.500-10-4.500z" fill="#fff" />
      </TaskApp>
      <TaskApp label="PowerPoint">
        <circle cx="14" cy="13" r="11" fill="#d35230" />
        <path d="M14 2a11 11 0 0 1 11 11H14z" fill="#ff8f6b" />
        <path d="M14 2v11H3A11 11 0 0 1 14 2z" fill="#ed6c47" />
        <path d="M1 7h12v12H1z" fill="#c43e1c" />
        <text x="4" y="17" fontSize="10" fontWeight="700" fill="#fff">P</text>
      </TaskApp>
      <div className="-ml-1 flex">
        <button type="button" aria-label="Excel" className="flex h-10 w-11 items-center justify-center border-b-2 border-[#f6d9a8] bg-[#333333] pt-px pl-1">
          <svg width="26" height="26" viewBox="0 0 26 26" className="overflow-visible" aria-hidden="true">
            <path d="M8 2h17v22H8z" fill="#185c37" />
            <path d="M8 2h9v11H8z" fill="#21a366" />
            <path d="M17 2h8v5.500h-8z" fill="#33c481" />
            <path d="M17 7.500h8V13h-8z" fill="#21a366" />
            <path d="M8 13h17v5.500H8z" fill="#107c41" />
            <path d="M1 7h12v12H1z" fill="#107c41" />
            <text x="3.500" y="17" fontSize="10" fontWeight="700" fill="#fff">X</text>
          </svg>
        </button>
        <span className="h-10 w-1 border-b-2 border-l border-b-[#b5a080] border-l-[#222] bg-[#2b2a28]" />
      </div>
    </div>
  )
}

function Taskbar() {
  return (
    <div className="flex h-[81px] shrink-0 items-center bg-[linear-gradient(to_right,#3a3024,#403829_35%,#2b211b_54%,#3a2d21_70%,#3d3329_85%,#352d20)] text-white">
      <IconButton label="Start" className="h-full w-12">
        <svg width="16" height="16" viewBox="0 0 16 16" fill="#fff" aria-hidden="true">
          <path d="M0 2.200L6.700 1.200v6.400H0zM7.500 1.100L16 0v7.600H7.500zM0 8.400h6.700v6.400L0 13.800zM7.500 8.400H16V16l-8.500-1.100z" />
        </svg>
      </IconButton>
      <div className="flex h-full w-[344px] shrink-0 items-center border border-[#bdbdbd] bg-[#f1f1f1] pl-[11px]">
        <Svg w={17} h={17}>
          <circle cx="10.500" cy="6.300" r="5.500" stroke="#222" strokeWidth="1.200" />
          <path d="M6.500 10.300L.7 16" stroke="#222" strokeWidth="1.200" />
        </Svg>
        <input aria-label="Windows search" placeholder="Type here to search" className="ml-[11px] min-w-0 flex-1 bg-transparent text-[14px] outline-none placeholder:text-[#444]" />
      </div>
      <IconButton label="Cortana" className="h-full w-12">
        <Svg w={16} h={16}>
          <circle cx="8" cy="8" r="6.700" stroke="#fff" strokeWidth="2" />
        </Svg>
      </IconButton>
      <IconButton label="Task view" className="h-full w-12">
        <Svg w={17} h={16}>
          <path d="M.5 0v2.500h11V0M.5 16v-2.500h11V16M.5 4.500h11v7H.5zM14.500 0v4M14.500 9v7" stroke="#fff" />
          <path d="M13 5h3v3h-3z" fill="#fff" stroke="none" />
        </Svg>
      </IconButton>
      <div className="w-[7px]" />
      <TaskApps />
      <div className="min-w-0 flex-1" />
      <button type="button" className="flex w-[83px] items-center gap-[10px] text-[13px]">
        <span className="h-5 w-5 rounded-full bg-linear-to-br from-[#f7b733] to-[#f46a10]" />
        57°F
      </button>
      <IconButton label="Show hidden icons" className="h-8 w-5">
        <Svg w={12} h={7}>
          <path d="M.5 6.200L6 1l5.500 5.200" stroke="#fff" strokeWidth="1.200" />
        </Svg>
      </IconButton>
      <div className="ml-[6px] grid w-[98px] grid-cols-3 justify-items-center gap-y-6">
        <IconButton label="Meet now" className="h-4">
          <Svg w={14} h={16}>
            <path d="M3 1.500C5 .3 8 .3 10 1.500M3 14.500c2 1.200 5 1.200 7 0M1.500 4.500h8v7h-8zM9.500 7l2.500-2v6L9.500 9" stroke="#fff" />
          </Svg>
        </IconButton>
        <IconButton label="Updates" className="h-4">
          <Svg w={18} h={17}>
            <path d="M8 14L1 13V2.500L16.500.700V8" stroke="#fff" strokeWidth="1.200" />
            <path d="M5.500 7C6 4.500 9.500 4 11 6V3.500M11 8.500C10.500 11 7 11.500 5.500 9.500V12" stroke="#fff" />
            <circle cx="13.500" cy="13" r="3.700" fill="#2b72c4" stroke="none" />
          </Svg>
        </IconButton>
        <IconButton label="Network" className="h-4">
          <Svg w={14} h={14}>
            <path d="M1 13A12 12 0 0 1 13 1.500M4 13A9 9 0 0 1 13 4.500M7 13a6 6 0 0 1 6-5.500" stroke="#ddd" strokeWidth="1.200" />
            <circle cx="11.500" cy="12" r="1.500" fill="#fff" stroke="none" />
          </Svg>
        </IconButton>
        <IconButton label="Volume" className="h-4">
          <Svg w={17} h={14}>
            <path d="M.7 5h2L6 1.500v11L2.700 9h-2zM8.500 5c1 1.300 1 2.700 0 4M10.800 3.200c2 2.300 2 5.300 0 7.600" stroke="#fff" />
            <path d="M13 1.500c3 3.300 3 7.700 0 11" stroke="#888" />
          </Svg>
        </IconButton>
        <IconButton label="Battery" className="h-4">
          <Svg w={16} h={10}>
            <path d="M.5 1h13v8H.5zM14.500 3.500v3" stroke="#fff" />
            <path d="M2 2.500h5v5H2z" fill="#fff" stroke="none" />
          </Svg>
        </IconButton>
      </div>
      <IconButton label="Pen" className="ml-[2px] w-8">
        <Svg w={16} h={17}>
          <path d="M5 13c2-4 4.500-9 7-11.500 1-.8 2.500 0 2 1.500C12.500 6.500 9 10.500 6 14zM6.500 8C3 8 .5 11.500.8 14c.5 2 3 2 4.200 0M8 12.500c2 1 3-2.500 4.500-2 1 .5 1.500 1.500 3 .5" stroke="#fff" strokeWidth="1.100" />
        </Svg>
      </IconButton>
      <button type="button" className="w-20 text-center text-xs leading-[22px]">
        <span className="block">3:35 PM</span>
        <span className="block">Monday</span>
        <span className="block">11/21/2022</span>
      </button>
      <IconButton label="3 notifications" className="ml-1 h-8 w-[34px]">
        <svg width="26" height="26" viewBox="0 0 26 26" fill="none" className="overflow-visible" aria-hidden="true">
          <path d="M1 3h16v13H8l-3 3v-3H1z" fill="#fff" />
          <path d="M4 6.500h10M4 9.500h10M4 12.500h6" stroke="#333" />
          <circle cx="16.500" cy="18.500" r="8" fill="#333" stroke="#8a8a8a" />
          <text x="13.500" y="22.500" fontSize="11" fill="#fff">3</text>
        </svg>
      </IconButton>
      <button type="button" aria-label="Show desktop" className="ml-[7px] h-full w-[5px] border-l border-[#77716a]" />
    </div>
  )
}

export default function App() {
  return (
    <div className="flex h-screen flex-col overflow-hidden bg-[#f3f2f1] font-['Open_Sans','Noto_Sans',sans-serif] text-xs">
      <TitleBar />
      <TabRow />
      <Ribbon />
      <FormulaBar />
      <main id="sheet" className="flex min-h-0 flex-1 bg-[#e6e6e6]">
        <Sheet />
        <div role="scrollbar" aria-label="Vertical scroll" aria-orientation="vertical" aria-valuenow={8} aria-controls="sheet" className="mt-[2px] mr-[3px] ml-[3px] flex w-[15px] shrink-0 flex-col bg-[#dadada]">
          <ScrollButton label="Scroll up" d="M1 6.500h7L4.500 2.500z" />
          <div className="h-[13px]" />
          <div className="h-[115px] border border-[#777] bg-white" />
          <div className="flex-1" />
          <ScrollButton label="Scroll down" d="M1 2.500h7l-3.500 4z" />
        </div>
      </main>
      <SheetTabs />
      <StatusBar />
      <Taskbar />
    </div>
  )
}
